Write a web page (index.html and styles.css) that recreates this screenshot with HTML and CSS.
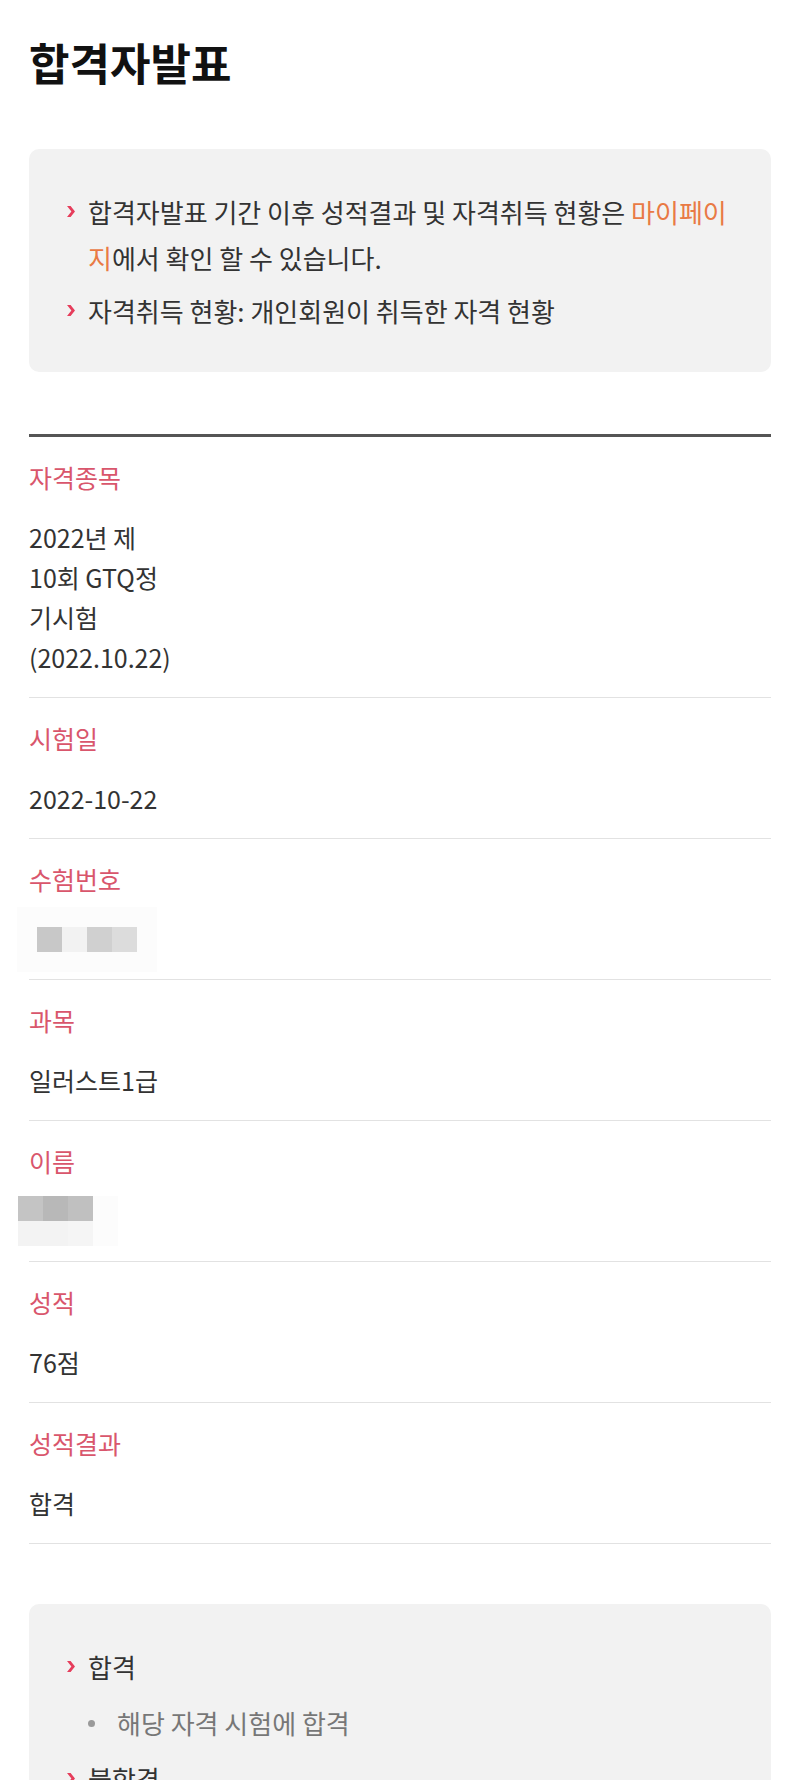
FILE: index.html
```html
<!DOCTYPE html>
<html>
<head>
    <title>합격자발표</title>
    <link rel="stylesheet" href="styles.css">
</head>
<body>
    <div class="page">
        <h1 class="page-title">합격자발표</h1>

        <div class="info-box">
            <ul class="info-list">
                <li>합격자발표 기간 이후 성적결과 및 자격취득 현황은 <a class="link" href="#">마이페이지</a>에서 확인 할 수 있습니다.</li>
                <li>자격취득 현황: 개인회원이 취득한 자격 현황</li>
            </ul>
        </div>

        <div class="result-table">
            <div class="row">
                <div class="label">자격종목</div>
                <div class="value">2022년 제<br>10회 GTQ정<br>기시험<br>(2022.10.22)</div>
            </div>
            <div class="row">
                <div class="label">시험일</div>
                <div class="value">2022-10-22</div>
            </div>
            <div class="row">
                <div class="label">수험번호</div>
                <div class="value blurred">
                    <div class="blur-area exam-no">
                        <span class="px px-c8"></span>
                        <span class="px px-f2"></span>
                        <span class="px px-d0"></span>
                        <span class="px px-dc"></span>
                    </div>
                </div>
            </div>
            <div class="row">
                <div class="label">과목</div>
                <div class="value">일러스트1급</div>
            </div>
            <div class="row">
                <div class="label">이름</div>
                <div class="value blurred">
                    <div class="blur-area name">
                        <span class="px px-c4"></span>
                        <span class="px px-b8"></span>
                        <span class="px px-c0"></span>
                        <span class="px px-fc"></span>
                        <span class="px px-f3"></span>
                        <span class="px px-f3"></span>
                        <span class="px px-f5"></span>
                        <span class="px px-fc"></span>
                    </div>
                </div>
            </div>
            <div class="row">
                <div class="label">성적</div>
                <div class="value">76점</div>
            </div>
            <div class="row">
                <div class="label">성적결과</div>
                <div class="value">합격</div>
            </div>
        </div>

        <div class="info-box legend-box">
            <ul class="info-list">
                <li>합격
                    <ul class="sub-list">
                        <li>해당 자격 시험에 합격</li>
                    </ul>
                </li>
                <li>불합격
                    <ul class="sub-list">
                        <li>해당 자격 시험에 불합격</li>
                    </ul>
                </li>
            </ul>
        </div>
    </div>
</body>
</html>
```

FILE: styles.css
```css
body {
    margin: 0;
    padding: 0;
    background-color: #ffffff;
    font-family: "Noto Sans CJK KR", "Noto Sans", sans-serif;
    color: #333333;
}

.page {
    padding: 0 29px;
}

.page-title {
    margin: 34px 0 59px;
    font-size: 44px;
    line-height: 56px;
    font-weight: bold;
    color: #111111;
}

.info-box {
    background-color: #f2f2f2;
    border-radius: 10px;
    padding: 40px 36px 38px 38px;
}

.info-list {
    list-style: none;
    margin: 0;
    padding: 0;
}

.info-list > li {
    position: relative;
    padding-left: 21px;
    font-size: 26px;
    line-height: 46px;
    color: #333333;
}

.info-list > li + li {
    margin-top: 7px;
}

.info-list > li::before {
    content: "";
    position: absolute;
    left: 0;
    top: 17px;
    width: 8px;
    height: 11px;
    background-color: #e63e5c;
    clip-path: polygon(0 0, 45% 0, 100% 50%, 45% 100%, 0 100%, 55% 50%);
}

.link {
    color: #e97a45;
    text-decoration: none;
}

.result-table {
    margin-top: 62px;
    border-top: 3px solid #555555;
}

.row {
    padding: 22px 0 20px;
    border-bottom: 1px solid #e2e2e2;
}

.label {
    font-size: 25px;
    line-height: 36px;
    color: #d9566c;
}

.value {
    margin-top: 22px;
    font-size: 25px;
    line-height: 40px;
    color: #333333;
}

.blurred {
    height: 40px;
    display: flex;
    align-items: center;
}

.blur-area {
    display: grid;
}

.exam-no {
    grid-template-columns: repeat(4, 25px);
    grid-auto-rows: 25px;
    margin-left: 8px;
    box-shadow: 0 0 0 20px #fcfcfc;
}

.name {
    grid-template-columns: repeat(4, 25px);
    grid-auto-rows: 25px;
    margin-left: -11px;
}

.px {
    display: block;
}

.px-c8 { background-color: #c8c8c8; }
.px-f2 { background-color: #f2f2f2; }
.px-d0 { background-color: #d0d0d0; }
.px-dc { background-color: #dcdcdc; }
.px-c4 { background-color: #c4c4c4; }
.px-b8 { background-color: #b8b8b8; }
.px-c0 { background-color: #c0c0c0; }
.px-fc { background-color: #fcfcfc; }
.px-f3 { background-color: #f3f3f3; }
.px-f5 { background-color: #f5f5f5; }

.legend-box {
    margin-top: 60px;
}

.legend-box .info-list > li + li {
    margin-top: 10px;
}

.sub-list {
    list-style: none;
    margin: 10px 0 0;
    padding: 0;
}

.sub-list li {
    position: relative;
    padding-left: 29px;
    font-size: 26px;
    line-height: 46px;
    color: #777777;
}

.sub-list li::before {
    content: "";
    position: absolute;
    left: 0;
    top: 20px;
    width: 7px;
    height: 7px;
    border-radius: 50%;
    background-color: #9a9a9a;
}
```
